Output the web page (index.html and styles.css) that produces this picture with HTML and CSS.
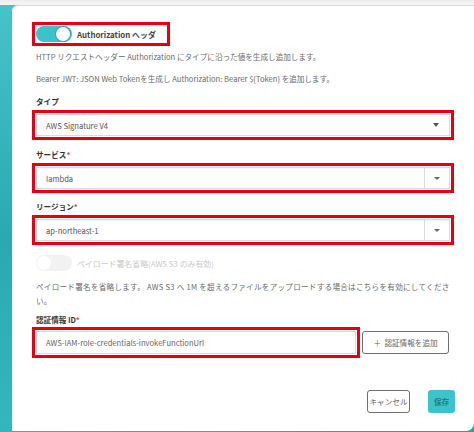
FILE: index.html
```html
<!DOCTYPE html>
<html lang="ja">
<head>
    <meta charset="UTF-8">
    <meta name="viewport" content="width=device-width, initial-scale=1.0">
    <title>Authorization ヘッダ</title>
    <link rel="stylesheet" href="styles.css">
</head>
<body>
    <div class="dialog">
        <div class="switch-row marked">
            <span class="switch on"><span class="knob"></span></span>
            <span class="switch-label">Authorization ヘッダ</span>
        </div>
        <p class="help first">HTTP リクエストヘッダー Authorization にタイプに沿った値を生成し追加します。</p>
        <p class="help second">Bearer JWT: JSON Web Tokenを生成し Authorization: Bearer ${Token} を追加します。</p>

        <label class="field-label l-type">タイプ</label>
        <div class="select marked s-type">
            <span class="value">AWS Signature V4</span>
            <span class="caret"></span>
        </div>

        <label class="field-label l-service">サービス<span class="req">*</span></label>
        <div class="select split marked s-service">
            <span class="value">lambda</span>
            <span class="caret"></span>
        </div>

        <label class="field-label l-region">リージョン<span class="req">*</span></label>
        <div class="select split marked s-region">
            <span class="value">ap-northeast-1</span>
            <span class="caret"></span>
        </div>

        <div class="switch-row disabled">
            <span class="switch"><span class="knob"></span></span>
            <span class="switch-label">ペイロード署名省略(AWS S3 のみ有効)</span>
        </div>
        <p class="help third">ペイロード署名を省略します。 AWS S3 へ 1M を超えるファイルをアップロードする場合はこちらを有効にしてください。</p>

        <label class="field-label l-cred">認証情報 ID<span class="req">*</span></label>
        <div class="cred-row">
            <div class="text-input marked">AWS-IAM-role-credentials-invokeFunctionUrl</div>
            <button class="btn outline add">＋&nbsp;&nbsp;認証情報を追加</button>
        </div>

        <div class="footer">
            <button class="btn outline cancel">キャンセル</button>
            <button class="btn primary">保存</button>
        </div>
    </div>
</body>
</html>
```

FILE: styles.css
```css
html, body {
    height: 100%;
}

body {
    margin: 0;
    font-family: 'Noto Sans CJK JP', 'Noto Sans', sans-serif;
    font-size: 7.6px;
    color: #555;
    background:
        linear-gradient(to bottom, #ececec 0, #f6f6f6 5px, transparent 5px),
        linear-gradient(160deg, #46c4ca 0%, #2ba9b1 40%, #33b6bd 70%, #2a9ea6 100%);
    overflow: hidden;
}

.dialog {
    margin: 5px 0 0 12px;
    height: 426px;
    box-sizing: border-box;
    background: white;
    border-top: 1px solid #d6d6d6;
    border-radius: 6px 0 8px 0;
    padding: 20px 24px 0 24px;
}

/* red annotation boxes */
.marked {
    outline: 3px solid #e60012;
    outline-offset: 1px;
}

.switch-row {
    display: flex;
    align-items: center;
    gap: 5px;
    width: 130px;
    height: 16px;
}

.switch {
    position: relative;
    flex-shrink: 0;
    width: 36px;
    height: 16px;
    border-radius: 8px;
    background: #eeeeee;
}

.switch .knob {
    position: absolute;
    top: 1px;
    left: 1px;
    width: 14px;
    height: 14px;
    border-radius: 50%;
    background: white;
}

.switch.on {
    background: #3ec2ca;
}

.switch.on .knob {
    left: 20px;
    box-shadow: 0 0 0 1px #2fa8b0;
}

.switch-label {
    font-weight: bold;
    color: #444;
    font-size: 7.9px;
    white-space: nowrap;
}

.switch-row.disabled {
    width: auto;
    margin-top: 14px;
}

.disabled .switch {
    background: #f2f2f2;
}

.disabled .switch-label {
    font-weight: normal;
    color: #c9c9c9;
}

.help {
    margin: 0;
    line-height: 14px;
    color: #6b6b6b;
}

.help.first { margin-top: 8px; }
.help.second { margin-top: 8px; }
.help.third {
    margin-top: 9px;
    letter-spacing: 0.25px;
}

.field-label {
    display: block;
    font-weight: bold;
    color: #333;
    line-height: 14px;
}

.req {
    color: #e23b3b;
}

.l-type { margin-top: 9px; }
.l-service { margin-top: 12px; }
.l-region { margin-top: 11px; }
.l-cred { margin-top: 5px; }

.select {
    display: flex;
    align-items: center;
    height: 22px;
    margin-top: 5px;
    border: 1px solid #dcdcdc;
    box-sizing: border-box;
    padding-left: 9px;
    box-shadow: inset 0 1px 1px rgba(0, 0, 0, 0.04);
}

.select .value {
    flex: 1;
    color: #555;
}

.caret {
    width: 0;
    height: 0;
    margin-right: 10px;
    border-left: 3.5px solid transparent;
    border-right: 3.5px solid transparent;
    border-top: 4px solid #555;
}

.select.split .caret {
    position: relative;
    margin-right: 0;
    width: 24px;
    height: 20px;
    border: none;
    border-left: 1px solid #dcdcdc;
}

.select.split .caret::after {
    content: '';
    position: absolute;
    left: 9px;
    top: 9px;
    border-left: 3px solid transparent;
    border-right: 3px solid transparent;
    border-top: 3px solid #666;
}

.cred-row {
    display: flex;
    align-items: center;
    gap: 6px;
    margin-top: 4px;
}

.text-input {
    width: 320px;
    height: 23px;
    box-sizing: border-box;
    border: 1px solid #dcdcdc;
    padding-left: 9px;
    line-height: 21px;
    color: #666;
}

.btn {
    font-family: inherit;
    font-size: 7.6px;
    border-radius: 3px;
    height: 23px;
    box-sizing: border-box;
    cursor: pointer;
}

.btn.outline {
    background: white;
    border: 1.5px solid #6f6f6f;
    color: #666;
    padding: 0 8px;
}

.btn.add {
    width: 87px;
    padding: 0 6px;
}

.btn.cancel {
    width: 43px;
    padding: 0;
}

.btn.primary {
    background: #3cc4cd;
    border: none;
    color: #1f7e86;
    font-weight: bold;
    width: 27px;
    padding: 0;
}

.footer {
    display: flex;
    justify-content: flex-end;
    gap: 18px;
    margin-top: 36px;
    margin-right: -5px;
}
```
